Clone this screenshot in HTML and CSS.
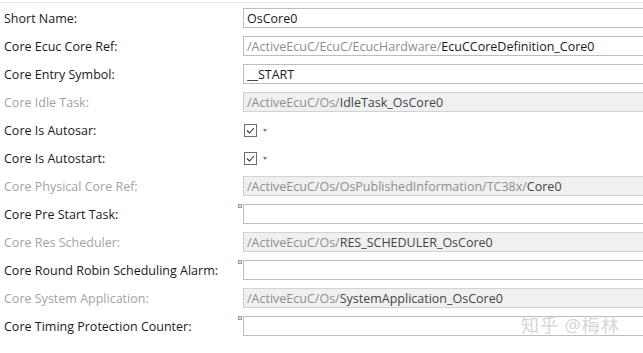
FILE: index.html
```html
<!DOCTYPE html>
<html>
<head>
    <title>Core Properties</title>
    <link rel="stylesheet" href="styles.css">
</head>
<body>
    <div class="panel">
        <div class="row">
            <label class="name">Short Name:</label>
            <span class="mark"></span>
            <div class="field">OsCore0</div>
        </div>
        <div class="row">
            <label class="name">Core Ecuc Core Ref:</label>
            <span class="mark"></span>
            <div class="field"><span class="path">/ActiveEcuC/EcuC/EcucHardware/</span>EcuCCoreDefinition_Core0</div>
        </div>
        <div class="row">
            <label class="name">Core Entry Symbol:</label>
            <span class="mark"></span>
            <div class="field">__START</div>
        </div>
        <div class="row disabled">
            <label class="name">Core Idle Task:</label>
            <span class="mark"></span>
            <div class="field"><span class="path">/ActiveEcuC/Os/</span>IdleTask_OsCore0</div>
        </div>
        <div class="row">
            <label class="name">Core Is Autosar:</label>
            <span class="mark"></span>
            <div class="check-wrap">
                <span class="check">
                    <svg width="9" height="7" viewBox="0 0 9 7"><path d="M1 3.5 L3.5 6 L8 1" fill="none" stroke="#333" stroke-width="1.1"/></svg>
                </span>
                <span class="drop"></span>
            </div>
        </div>
        <div class="row">
            <label class="name">Core Is Autostart:</label>
            <span class="mark"></span>
            <div class="check-wrap">
                <span class="check">
                    <svg width="9" height="7" viewBox="0 0 9 7"><path d="M1 3.5 L3.5 6 L8 1" fill="none" stroke="#333" stroke-width="1.1"/></svg>
                </span>
                <span class="drop"></span>
            </div>
        </div>
        <div class="row disabled">
            <label class="name">Core Physical Core Ref:</label>
            <span class="mark"></span>
            <div class="field"><span class="path">/ActiveEcuC/Os/OsPublishedInformation/TC38x/</span>Core0</div>
        </div>
        <div class="row">
            <label class="name">Core Pre Start Task:</label>
            <span class="mark"><span class="dot"></span></span>
            <div class="field"></div>
        </div>
        <div class="row disabled">
            <label class="name">Core Res Scheduler:</label>
            <span class="mark"></span>
            <div class="field"><span class="path">/ActiveEcuC/Os/</span>RES_SCHEDULER_OsCore0</div>
        </div>
        <div class="row">
            <label class="name">Core Round Robin Scheduling Alarm:</label>
            <span class="mark"><span class="dot"></span></span>
            <div class="field"></div>
        </div>
        <div class="row disabled">
            <label class="name">Core System Application:</label>
            <span class="mark"></span>
            <div class="field"><span class="path">/ActiveEcuC/Os/</span>SystemApplication_OsCore0</div>
        </div>
        <div class="row">
            <label class="name">Core Timing Protection Counter:</label>
            <span class="mark"><span class="dot"></span></span>
            <div class="field"></div>
        </div>
    </div>
    <div class="watermark">知乎 @梅林</div>
</body>
</html>
```

FILE: styles.css
```css
:root {
    --text: #1a1a1a;
    --muted: #a3a3a3;
    --path: #8e8e8e;
    --border: #bdbdbd;
    --disabled-bg: #f0f0f0;
    --disabled-border: #d2d2d2;
}

html, body {
    margin: 0;
    background: #ffffff;
    overflow: hidden;
}

body {
    font-family: "Open Sans", "Noto Sans CJK SC", sans-serif;
    font-size: 12.5px;
    color: var(--text);
    position: relative;
    height: 353px;
}

.panel {
    margin-top: 2px;
    border-top: 1px solid #e6e6e6;
    padding-top: 1px;
}

.row {
    display: flex;
    align-items: center;
    height: 28px;
}

.name {
    width: 235px;
    padding-left: 4px;
    white-space: nowrap;
}

.mark {
    width: 4px;
    height: 20px;
    position: relative;
}

/* little marker in front of empty reference fields */
.dot {
    position: absolute;
    left: -1px;
    top: 0;
    width: 4px;
    height: 4px;
    border: 1px solid #7da7d9;
    background: #cfe0f5;
    box-sizing: border-box;
}

.field {
    flex: 1;
    height: 20px;
    line-height: 19px;
    margin-right: -20px;
    border: 1px solid var(--border);
    box-sizing: border-box;
    padding-left: 3px;
    white-space: nowrap;
}

.path {
    color: var(--path);
}

.disabled .name {
    color: var(--muted);
}

.disabled .field {
    background: var(--disabled-bg);
    border-color: var(--disabled-border);
    color: #444;
}

.check-wrap {
    display: flex;
    align-items: center;
    gap: 6px;
    margin-left: 1px;
}

.check {
    width: 13px;
    height: 13px;
    border: 1px solid #6e6e6e;
    box-sizing: border-box;
    display: flex;
    align-items: center;
    justify-content: center;
}

.drop {
    width: 0;
    height: 0;
    border-left: 2.5px solid transparent;
    border-right: 2.5px solid transparent;
    border-top: 3px solid #4a86c8;
}

.watermark {
    position: absolute;
    left: 521px;
    top: 311px;
    font-size: 18px;
    color: #d6d6d6;
    letter-spacing: 1px;
}
```
